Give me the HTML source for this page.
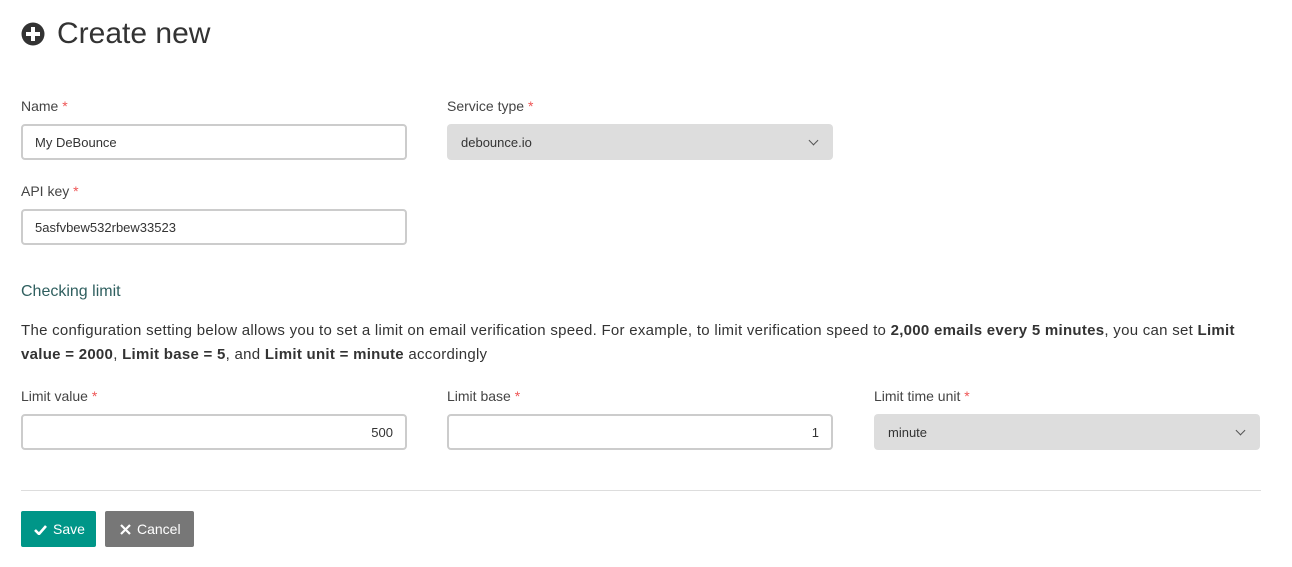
<!DOCTYPE html>
<html><head><style>
body{margin:0;width:1292px;height:567px;background:#fff;font-family:"Liberation Sans",sans-serif;color:#333;position:relative;overflow:hidden}
.a{position:absolute}
.lbl{font-size:14px;color:#444}
.lbl span{color:#e55}
.in{position:absolute;box-sizing:border-box;height:36px;width:386px;border:2px solid #ccc;border-radius:4px;background:#fff;font-size:13px;line-height:33px;padding:0 12px;color:#333}
.sel{border:none;background:#ddd;line-height:37px;padding:0 14px}
.chev{position:absolute;right:16px;top:13px;width:6px;height:6px;border-right:1.5px solid #555;border-bottom:1.5px solid #555;transform:rotate(45deg)}
.btn{position:absolute;top:511px;height:36px;color:#fff;font-size:14px;line-height:37px;border-radius:2px;box-sizing:border-box}
</style></head><body>
<svg class="a" style="left:21px;top:22px" width="24" height="24" viewBox="0 0 24 24"><circle cx="12" cy="12" r="11.5" fill="#333"/><rect x="10" y="5" width="4" height="14" fill="#fff"/><rect x="5" y="10" width="14" height="4" fill="#fff"/></svg>
<div class="a" style="left:57px;top:17px;font-size:30px;color:#333">Create new</div>

<div class="a lbl" style="left:21px;top:98px">Name <span>*</span></div>
<div class="in" style="left:21px;top:124px">My DeBounce</div>
<div class="a lbl" style="left:447px;top:98px">Service type <span>*</span></div>
<div class="in sel" style="left:447px;top:124px">debounce.io<div class="chev"></div></div>

<div class="a lbl" style="left:21px;top:183px">API key <span>*</span></div>
<div class="in" style="left:21px;top:209px">5asfvbew532rbew33523</div>

<div class="a" style="left:21px;top:283px;font-size:16px;color:#2f5f5f">Checking limit</div>
<div class="a" style="left:21px;top:319px;width:1245px;font-size:15px;letter-spacing:0.28px;line-height:24px;color:#333">The configuration setting below allows you to set a limit on email verification speed. For example, to limit verification speed to <b>2,000 emails every 5 minutes</b>, you can set <b>Limit value = 2000</b>, <b>Limit base = 5</b>, and <b>Limit unit = minute</b> accordingly</div>

<div class="a lbl" style="left:21px;top:388px">Limit value <span>*</span></div>
<div class="in" style="left:21px;top:414px;text-align:right">500</div>
<div class="a lbl" style="left:447px;top:388px">Limit base <span>*</span></div>
<div class="in" style="left:447px;top:414px;text-align:right">1</div>
<div class="a lbl" style="left:874px;top:388px">Limit time unit <span>*</span></div>
<div class="in sel" style="left:874px;top:414px">minute<div class="chev"></div></div>

<div class="a" style="left:21px;top:490px;width:1240px;height:1px;background:#ddd"></div>

<div class="btn" style="left:21px;width:75px;background:#009688;padding-left:14px">
<svg style="position:absolute;left:13px;top:13px" width="13" height="11" viewBox="0 0 13 11"><path d="M1 6l4 4 7-8" stroke="#fff" stroke-width="2.6" fill="none"/></svg><span style="margin-left:18px">Save</span></div>
<div class="btn" style="left:105px;width:89px;background:#777;padding-left:14px">
<svg style="position:absolute;left:15px;top:13px" width="11" height="11" viewBox="0 0 11 11"><path d="M1 1l9 9M10 1l-9 9" stroke="#fff" stroke-width="2.2"/></svg><span style="margin-left:18px">Cancel</span></div>
</body></html>
